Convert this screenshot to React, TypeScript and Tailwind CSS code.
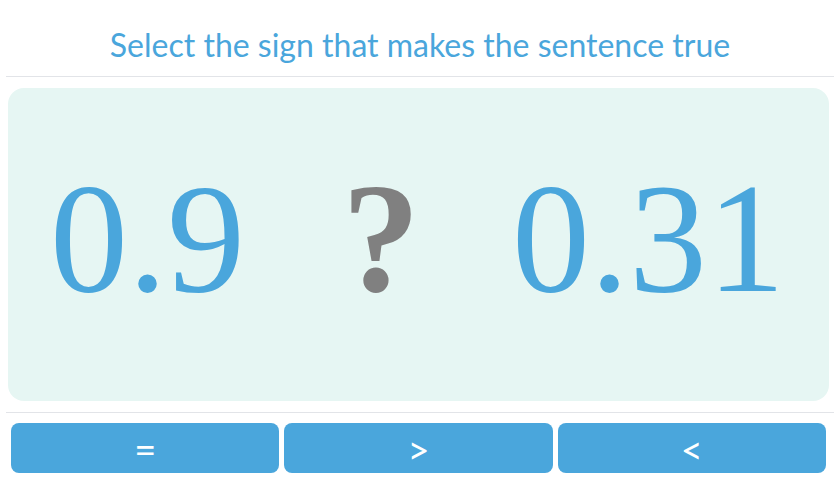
import React from "react";

export default function App() {
  const serif = { fontFamily: '"Liberation Serif", "Times New Roman", serif' };
  return (
    <div className="w-[840px] h-[501px] bg-white flex flex-col" style={{ fontFamily: 'Lato, "Open Sans", sans-serif' }}>
      <div className="h-[77px] flex items-center justify-center pt-[14px] mx-[6px] border-b border-[#e2e4e8]">
        <h1 className="text-[32px] text-[#4aa6dc] leading-none">Select the sign that makes the sentence true</h1>
      </div>
      <div className="mt-[11px] mx-[8px] mr-[11px] h-[313px] rounded-[16px] bg-[#e6f6f3] flex items-center pl-[42px] pb-[12px]" style={serif}>
        <span className="text-[156px] leading-none text-[#4aa6dc]">0.9</span>
        <span className="ml-[97px] text-[156px] leading-none text-[#808080] font-bold">?</span>
        <span className="ml-[92px] text-[156px] leading-none text-[#4aa6dc]">0.31</span>
      </div>
      <div className="mt-[11px] mx-[6px] border-t border-[#e2e4e8]" />
      <div className="mt-[10px] mx-[11px] mr-[14px] grid grid-cols-3 gap-[5px]">
        {["=", ">", "<"].map((s) => (
          <button key={s} className="h-[50px] rounded-[8px] bg-[#4aa6dc] text-white text-[38px] leading-none flex items-center justify-center pt-[1px]">
            {s}
          </button>
        ))}
      </div>
    </div>
  );
}
